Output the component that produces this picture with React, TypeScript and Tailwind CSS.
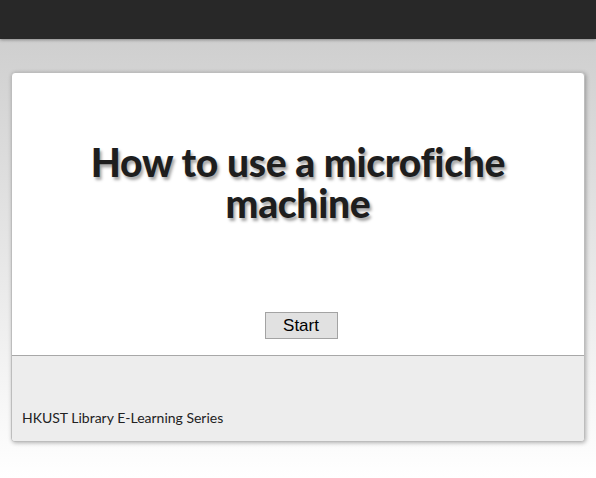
export default function App() {
  return (
    <div className="flex h-[478px] w-[596px] flex-col overflow-hidden bg-gradient-to-b from-[#cbcbcb] to-[#ffffff]">
      <div className="h-[39px] shrink-0 bg-[#282828] shadow-[0_1px_3px_rgba(0,0,0,0.35)]" />
      <div className="px-[11px] pt-[33px]">
        <div className="flex h-[370px] flex-col overflow-hidden rounded-[4px] border border-[#bdbdbd] bg-white shadow-[1px_1px_4px_rgba(0,0,0,0.3)]">
          <div className="flex h-[283px] flex-col items-center border-b border-[#a8a8a8]">
            <h1
              className="mt-[69px] text-center text-[39px] font-black leading-[41px] tracking-[-0.3px] text-[#1e1e1e] [text-shadow:2px_3px_3px_rgba(0,0,0,0.35)]"
              style={{ fontFamily: 'Lato, "Open Sans", sans-serif' }}
            >
              How to use a microfiche
              <br />
              machine
            </h1>
            <button
              className="ml-[6px] mt-[88px] h-[27px] w-[73px] border border-[#a3a3a3] bg-[#e1e1e1] text-[17px] leading-none text-black"
              style={{ fontFamily: '"Liberation Sans", Arial, sans-serif' }}
            >
              Start
            </button>
          </div>
          <div className="flex flex-1 items-end bg-[#ededed] px-[10px] pb-[13px]">
            <span
              className="text-[14px] text-[#222]"
              style={{ fontFamily: 'Lato, "Open Sans", sans-serif' }}
            >
              HKUST Library E-Learning Series
            </span>
          </div>
        </div>
      </div>
    </div>
  )
}
